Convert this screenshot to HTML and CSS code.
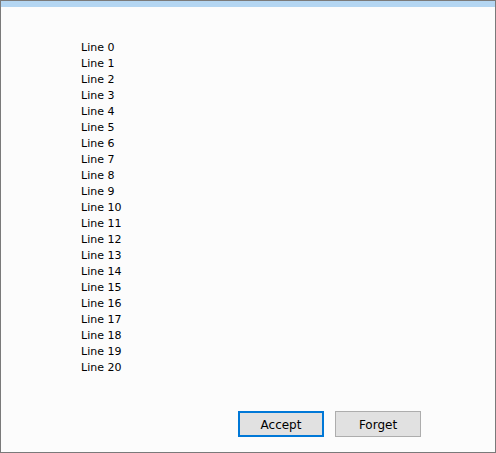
FILE: index.html
```html
<!DOCTYPE html>
<html lang="en">
  <head>
    <meta http-equiv="Content-Type" content="text/html;charset=UTF-8" />
    <title>Lines</title>
    <link rel="stylesheet" href="styles.css">
  </head>
  <body>
    <div class="window">
      <div class="title-bar"></div>
      <div class="content">
        <ul class="line-list">
          <li>Line 0</li>
          <li>Line 1</li>
          <li>Line 2</li>
          <li>Line 3</li>
          <li>Line 4</li>
          <li>Line 5</li>
          <li>Line 6</li>
          <li>Line 7</li>
          <li>Line 8</li>
          <li>Line 9</li>
          <li>Line 10</li>
          <li>Line 11</li>
          <li>Line 12</li>
          <li>Line 13</li>
          <li>Line 14</li>
          <li>Line 15</li>
          <li>Line 16</li>
          <li>Line 17</li>
          <li>Line 18</li>
          <li>Line 19</li>
          <li>Line 20</li>
        </ul>
        <div class="button-row">
          <button class="btn btn-default">Accept</button>
          <button class="btn">Forget</button>
        </div>
      </div>
    </div>
  </body>
</html>
```

FILE: styles.css
```css
* {
  margin: 0;
  padding: 0;
  box-sizing: border-box;
}

body {
  font-family: "DejaVu Sans", Tahoma, sans-serif;
  font-size: 11px;
  color: #000;
  background: #fcfcfc;
}

.window {
  width: 496px;
  height: 453px;
  border: 1px solid #7a7a7a;
  background: #fcfcfc;
  display: flex;
  flex-direction: column;
}

.title-bar {
  height: 6px;
  background: #b4d6f2;
}

.content {
  flex: 1;
  display: flex;
  flex-direction: column;
  padding: 33px 0 0 80px;
}

.line-list {
  list-style: none;
}

.line-list li {
  height: 16px;
  line-height: 16px;
}

.button-row {
  display: flex;
  gap: 11px;
  margin-top: 35px;
  padding-left: 157px;
}

.btn {
  width: 86px;
  height: 26px;
  font-family: inherit;
  font-size: 12px;
  color: #000;
  background: #e1e1e1;
  border: 1px solid #adadad;
  padding-top: 1px;
}

.btn-default {
  border: 2px solid #0078d7;
}
```
